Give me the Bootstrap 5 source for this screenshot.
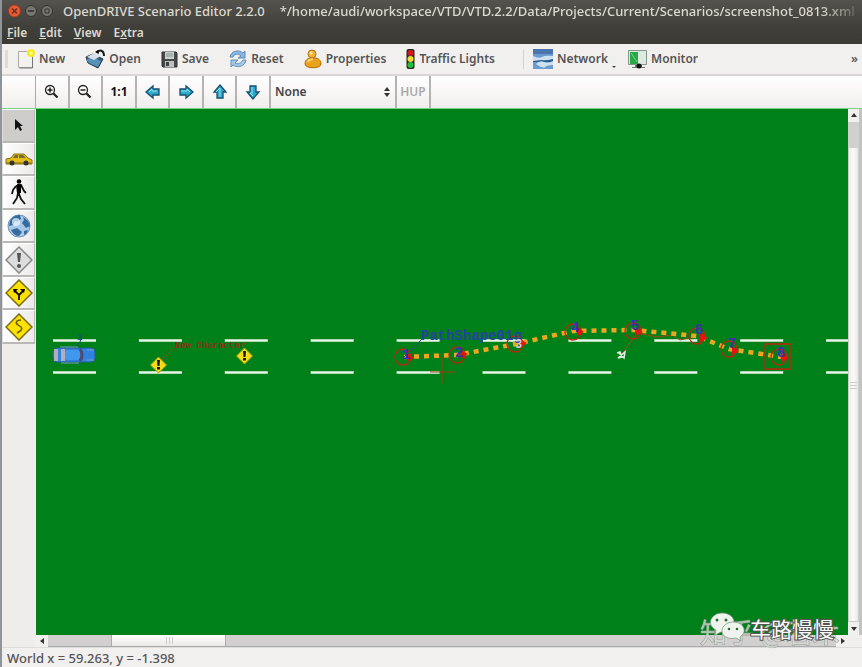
<!DOCTYPE html>
<html lang="en">
<head>
<meta charset="utf-8">
<meta name="viewport" content="width=device-width, initial-scale=1">
<title>OpenDRIVE Scenario Editor 2.2.0</title>
<link href="https://cdn.jsdelivr.net/npm/bootstrap@5.3.0/dist/css/bootstrap.min.css" rel="stylesheet">
<style>
body{font:600 12px/16px "Noto Sans","Open Sans",sans-serif;color:#555;background:#f1efee;border-left:2px solid #8e9498}
button{font:inherit;color:inherit;background:none;border:0;padding:0}
svg{display:block;flex:none}
.head-bar{background:linear-gradient(#55534d,#403f39 60%,#3b3a35);color:#dcd9d0}
.title-row{height:22px;padding:0 2px 0 6px;font-size:13px;font-weight:500}
.title-name{margin-left:9px;margin-right:15px}
.file-path{-webkit-mask-image:linear-gradient(90deg,#000 94%,#0003)}
.menu-row{height:22px;padding-left:5px;gap:12px}
.tool-row{height:32px;border-bottom:2px solid #dad8d6;background:#f2f0ef;padding-left:3px}
.grip{width:3px;height:18px;background:#dddbd9;margin-right:9px}
.tool-set{gap:20px}
.tool-set.tight{gap:12px}
.tool-set button{gap:4px}
.divide{width:1px;height:20px;background:#d5d3d1;margin:0 9px 0 28px}
.view-row{height:33px;background:linear-gradient(#fff,#f0eeec);border-bottom:1px solid #7bd388}
.pad-cell{width:34px;border-right:1px solid #aaa}
.view-set{width:235px}
.view-set button,.hup{border-right:2px solid #b5b3b1;color:#111;background:linear-gradient(#fff,#f0eeec)}
.pick-box{width:126px;border-right:2px solid #b5b3b1}
.pick-box select{font:inherit;color:#444;appearance:none;background:transparent;border:0;padding:0 4px}
.pick-box svg{right:4px;top:10px;pointer-events:none}
.hup{width:34px;color:#aaa!important}
.side-bar{width:33px;background:#efedec;margin-right:1px}
.side-set{height:235px}
.side-set button{background:linear-gradient(90deg,#fff,#eceae9);border:1px solid #bab8b6;border-left-color:#ddd;border-top-color:#fff;border-bottom-width:2px}
.side-set button.on{background:#cfcdcc}
.plane{background:#008019;min-width:0}
.plane text{font-family:"Liberation Mono",monospace}
.vbar{width:14px;background:#d2d0cf;border-right:3px solid #c5c3c2}
.hbar{height:12px;background:#d2d0cf;margin-right:14px;border-bottom:1px solid #aaa}
.knob{background:#f2f0ef;width:12px;height:12px}
.vbar .knob{width:11px;height:13px}
.slide-v{background:linear-gradient(90deg,#f0eeed,#fafafa,#e9e7e6);border:1px solid #d0cecd;margin-top:25px}
.slide-h{width:115px;background:linear-gradient(#fff,#ebe9e8);margin-left:63px;border:1px solid #aaa;border-width:0 1px}
.status{height:20px;padding-left:5px;background:#f2f0ef;border-top:1px solid #ddd;font-size:13px;font-weight:500}
.stamp{right:12px;bottom:18px;width:150px;height:38px;font-weight:400}
</style>
<script src="https://cdn.jsdelivr.net/npm/bootstrap@5.3.0/dist/js/bootstrap.bundle.min.js"></script>
</head>
<body class="vh-100 d-flex flex-column overflow-hidden position-relative">
<header class="head-bar">
  <div class="title-row d-flex align-items-center text-nowrap">
    <svg width="46" height="16" fill="none"><circle cx="6.500" cy="8" r="6" fill="#e75b37" stroke="#993d25"/><path d="M4 5.500l5 5m0-5l-5 5" stroke="#71301e" stroke-width="1.600"/><circle cx="23" cy="8" r="5.500" fill="#77756f" stroke="#33322e"/><path d="M20 8h6" stroke="#33322e" stroke-width="1.500"/><circle cx="39" cy="8" r="5.500" fill="#77756f" stroke="#33322e"/><path d="M37 6h4v4h-4z" stroke="#33322e"/></svg>
    <span class="title-name">OpenDRIVE Scenario Editor 2.2.0</span><span class="file-path">*/home/audi/workspace/VTD/VTD.2.2/Data/Projects/Current/Scenarios/screenshot_0813.xml</span>
  </div>
  <nav class="menu-row d-flex align-items-center">
    <button><u>F</u>ile</button><button><u>E</u>dit</button><button><u>V</u>iew</button><button>E<u>x</u>tra</button>
  </nav>
</header>
<div class="tool-row d-flex align-items-center text-nowrap">
  <span class="grip"></span>
  <div class="tool-set d-flex align-items-center">
    <button class="d-flex align-items-center"><svg width="18" height="20"><path d="M1.500 2.500h14v16h-14z" fill="#f3f2ed" stroke="#aaa"/><path d="M15.500 7v12h-13" fill="none" stroke="#777"/><circle cx="14" cy="4" r="4" fill="#f4ed24"/><circle cx="14" cy="4" r="1.500" fill="#ffffa0"/></svg>New</button>
    <button class="d-flex align-items-center"><svg width="20" height="20"><path d="M1 8l7-3 10 5-5 9-10-5z" fill="#315b7c" stroke="#29394a"/><path d="M1 11l6-3 9 4-3 6-9-4z" fill="#5992b8"/><path d="M2 8l7-4 7 3-7 4z" fill="#d5dfe5"/><path d="M12 4c2-4 7-3 7 3" fill="none" stroke="#151a20" stroke-width="2"/><path d="M10 3l3-2 1 4z"/></svg>Open</button>
    <button class="d-flex align-items-center"><svg width="17" height="18"><path d="M1 2h14l1 1v14H2l-1-1z" fill="#45494b" stroke="#303233"/><path d="M4 2h9v7H4z" fill="#c8d2ce"/><path d="M5 4h7M5 6h7" stroke="#829087"/><path d="M4 11h9v6H4z" fill="#bdbfc0"/><path d="M5 12h3v4H5z" fill="#3d4142"/></svg>Save</button>
    <button class="d-flex align-items-center"><svg width="18" height="18"><path d="M1 7c1-6 9-8 13-4l2-2v7H9l3-2C9 3 5 4 4 7z" fill="#8bb6df" stroke="#5b8abb"/><path d="M17 10c-1 7-9 8-13 5l-2 2v-7h7l-3 3c3 2 6 0 8-3z" fill="#a6c8e8" stroke="#6290bd"/></svg>Reset</button>
    <button class="d-flex align-items-center"><svg width="18" height="20"><path d="M1 15c0-4 3-6 6-6h4c3 0 6 2 6 6 0 5-16 5-16 0z" fill="#e9a31b" stroke="#b36c08"/><path d="M4 13c1-2 3-3 5-3" fill="none" stroke="#ffd975" stroke-width="2"/><circle cx="8" cy="5" r="4" fill="#eeb436" stroke="#b7720d"/><circle cx="7" cy="4" r="1.500" fill="#ffe4a0"/></svg>Properties</button>
    <button class="d-flex align-items-center"><svg width="9" height="22"><rect x=".5" y="1" width="8" height="20" rx="2" fill="#252b1e"/><circle cx="4.500" cy="5" r="3" fill="#d51b22"/><circle cx="4.500" cy="11" r="3" fill="#f2db36"/><circle cx="4.500" cy="17" r="3" fill="#26bd3d"/></svg>Traffic Lights</button>
  </div>
  <span class="divide"></span>
  <div class="tool-set tight d-flex align-items-center">
    <button class="d-flex align-items-center"><svg width="20" height="20"><path d="M0 0h20v20H0z" fill="#6b9bd0"/><path d="M0 0h20v5H0z" fill="#4b75ae"/><path d="M0 10h20v3H0z" fill="#2d5a8e"/><path d="M0 7q6 3 9 1t11-1v3q-7 2-11 1L0 12zM3 15q4-4 8-2t9-1v4q-6 0-8 2t-9-3z" fill="#cce2ef"/></svg>Network<svg width="4" height="20"><path d="M0 17h4l-2 2z" fill="#444"/></svg></button>
    <button class="d-flex align-items-center"><svg width="19" height="20"><path d="M.5 1.500h18v14H.5z" fill="#dce9df" stroke="#819788"/><path d="M2 3h8v12H2z" fill="#28a746"/><path d="M3 4l6 9" stroke="#73d388"/><path d="M7 16h7v2h3v1H4v-1h3z" fill="#777"/><circle cx="11" cy="17" r="2.500" fill="#111"/></svg>Monitor</button>
  </div>
  <button class="ms-auto pe-1" aria-label="More tools">»</button>
</div>
<div class="view-row d-flex">
  <span class="pad-cell"></span>
  <div class="view-set d-flex">
    <button class="flex-fill w-100 d-flex align-items-center justify-content-center" aria-label="Zoom in"><svg width="16" height="16" fill="none" stroke="#222"><circle cx="6" cy="6" r="4.500" stroke-width="1.300"/><path d="M3.500 6h5M6 3.500v5" stroke-width="1.500"/><path d="M9.500 9.500l4 4" stroke-width="2.300"/></svg></button>
    <button class="flex-fill w-100 d-flex align-items-center justify-content-center" aria-label="Zoom out"><svg width="16" height="16" fill="none" stroke="#222"><circle cx="6" cy="6" r="4.500" stroke-width="1.300"/><path d="M3.500 6h5" stroke-width="1.500"/><path d="M9.500 9.500l4 4" stroke-width="2.300"/></svg></button>
    <button class="flex-fill w-100 fw-bold">1:1</button>
    <button class="flex-fill w-100 d-flex align-items-center justify-content-center" aria-label="Pan left"><svg width="16" height="16"><path id="arrow" d="M1 8l7-6v3h6v6H8v3z" fill="#31a9c9" stroke="#164f70" stroke-width="1.300"/><path d="M4 8l3-3v2h5" fill="none" stroke="#8de0ed"/></svg></button>
    <button class="flex-fill w-100 d-flex align-items-center justify-content-center" aria-label="Pan right"><svg width="16" height="16"><g transform="rotate(180 8 8)"><use href="#arrow"/></g><path d="M3 7h6V5l3 3" fill="none" stroke="#8de0ed"/></svg></button>
    <button class="flex-fill w-100 d-flex align-items-center justify-content-center" aria-label="Pan up"><svg width="16" height="16"><g transform="rotate(90 8 8)"><use href="#arrow"/></g><path d="M4 8l4-4v9" fill="none" stroke="#8de0ed"/></svg></button>
    <button class="flex-fill w-100 d-flex align-items-center justify-content-center" aria-label="Pan down"><svg width="16" height="16"><g transform="rotate(-90 8 8)"><use href="#arrow"/></g><path d="M7 3v6H5l3 3" fill="none" stroke="#8de0ed"/></svg></button>
  </div>
  <div class="pick-box position-relative"><select class="w-100 h-100" aria-label="Selection"><option>None</option></select><svg class="position-absolute" width="8" height="12"><path d="M1 5l3-4 3 4zM1 7l3 4 3-4z" fill="#333"/></svg></div>
  <button class="hup" disabled>HUP</button>
</div>
<main class="flex-fill d-flex overflow-hidden">
  <aside class="side-bar flex-shrink-0"><div class="side-set d-flex flex-column">
    <button class="on flex-fill d-flex align-items-center justify-content-center" aria-label="Select"><svg width="28" height="28"><path d="M10 8v11l3-3 2 4 2-1-2-4h3z" fill="#111"/></svg></button>
    <button class="flex-fill d-flex align-items-center justify-content-center" aria-label="Vehicle"><svg width="28" height="28"><path d="M1 14l5-1 3-4h10l4 4 4 2v4H1z" fill="#e5bc18" stroke="#887114"/><path d="M8 13l2-3h3v3zm6-3h4l3 3h-7z" fill="#746c3b"/><path d="M1 18h25" stroke="#7e6818"/><circle cx="7" cy="18" r="2.500" fill="#34342d"/><circle cx="21" cy="18" r="2.500" fill="#34342d"/></svg></button>
    <button class="flex-fill d-flex align-items-center justify-content-center" aria-label="Pedestrian"><svg width="28" height="28"><circle cx="14" cy="3.500" r="2.300"/><path d="M12 7h4l3 6 2 2M11 8l-3 4-1 4M14 7v9l2 5 4 5M13 15l-1 5-4 6" fill="none" stroke="#111" stroke-width="1.800"/><path d="M11 7h5v8h-4z"/></svg></button>
    <button class="flex-fill d-flex align-items-center justify-content-center" aria-label="World"><svg width="28" height="28"><circle cx="14" cy="14" r="11" fill="#a7c8e7" stroke="#7293b5"/><path d="M5 9q4-7 10-6l1 4-4 3-2-1-2 4-4 1zm13-4q6 3 7 9l-4 2-4-5 2-3zM6 18l6-2 5 4-3 4q-5 0-8-6zm13 1l4-1q-1 4-4 5z" fill="#356c9f"/><circle cx="11" cy="10" r="4" fill="#eef7ff" opacity=".7"/></svg></button>
    <button class="flex-fill d-flex align-items-center justify-content-center" aria-label="Action"><svg width="28" height="28"><path d="M14 1l13 13-13 13L1 14z" fill="#ddd" stroke="#888" stroke-width="1.500"/><path d="M12 7h4l-1 9h-2z" fill="#555"/><circle cx="14" cy="20" r="2" fill="#555"/></svg></button>
    <button class="flex-fill d-flex align-items-center justify-content-center" aria-label="Route"><svg width="28" height="28"><path d="M14 1l13 13-13 13L1 14z" fill="#ffe100" stroke="#776c12" stroke-width="1.500"/><path d="M14 21v-5l-4-4m4 4l4-4" fill="none" stroke="#111" stroke-width="1.800"/><path d="M8 10h5l-4 4zm12 0h-5l4 4z"/></svg></button>
    <button class="flex-fill d-flex align-items-center justify-content-center" aria-label="Path"><svg width="28" height="28"><path d="M14 1l13 13-13 13L1 14z" fill="#ffe100" stroke="#776c12" stroke-width="1.500"/><path d="M16 7c-5 0-6 3-3 5l3 2c2 2 0 4-4 6" fill="none" stroke="#665a08" stroke-width="1.500"/></svg></button>
  </div></aside>
  <div class="flex-fill d-flex flex-column overflow-hidden">
    <div class="d-flex flex-fill overflow-hidden">
      <div class="plane flex-fill overflow-hidden">
        <!-- Scenario drawing: lane marks, vehicle, triggers and path -->
        <svg class="w-100 h-100"><g transform="translate(-36 -109)" fill="none">
          <path d="M53 340.500h875M53 372.500h875" stroke="#e8f6e8" stroke-width="2.500" stroke-dasharray="43 42.900"/>
          <path d="M82 335l-2 7-7 8" stroke="#174f7b"/><text x="77" y="340" font-size="9" fill="#155487">1</text>
          <rect x="53" y="348" width="42" height="14" rx="4" fill="#2f83df" stroke="#285d91"/><path d="M54 349h4v12h-4zM61 349h4v12h-4z" fill="#b4adb9"/><rect x="65" y="350" width="15" height="10" rx="2" fill="#4196ed"/><path d="M80 349q4 6 0 12" stroke="#4f4b6f" stroke-width="3"/><path d="M60 347h18M61 363h18M87 350h7M87 360h7" stroke="#789fc3"/>
          <path d="M159 363l17-17" stroke="#8a4c0b"/><text x="175" y="348" font-size="9" font-weight="700" fill="#8e3110">New Character</text>
          <g id="warn"><path d="M158.500 357l8 8-8 8-8-8z" fill="#f4dc16" stroke="#ac9c0c"/><path d="M157 360h3l-.5 6h-2zm0 7h3v2.500h-3z" fill="#161909"/></g><use href="#warn" x="86" y="-9"/>
          <path d="M442 357v26M430 372h25" stroke="#a13c0c"/>
          <path d="M637 333l-15 21" stroke="#93500d"/><path d="M637 333l20 4 15-2 8 5 14-3" stroke="#994b0c"/><path d="M617 353l3-1 2 5-4 1 7-6-1 6-5-5" stroke="#e6eee4" stroke-width="1.500"/>
          <path d="M404 357L457 355 516 344 573 331 634 330 697 336 729 349 781 357" stroke="#eea620" stroke-width="4.500" stroke-dasharray="5 5"/>
          <g stroke="#bd260a" stroke-width="1.300"><circle cx="403" cy="357" r="8"/><circle cx="457" cy="355" r="8"/><circle cx="515" cy="344" r="8"/><circle cx="573" cy="332" r="8"/><circle cx="633" cy="331" r="8"/><circle cx="697" cy="336" r="8"/><circle cx="729" cy="349" r="8"/><circle cx="779" cy="357" r="8"/><path d="M765 344h25v25h-25z"/></g>
          <path d="M407 353l7 5-7 4zM460 350l8 4-7 5zM519 339l8 4-7 5zM577 327l7 5-7 4zM635 327l8 5-8 4zM700 332l8 6-8 4zM732 346l7 5-7 4zM782 353l7 5-7 4z" fill="#e51413"/>
          <path d="M404 357l18-18" stroke="#254b75"/>
          <text x="421" y="340" font-size="14" fill="#2742a0">PathShape01g</text>
          <g font-size="14" font-weight="700" fill="#3d2fb0"><text x="402" y="359">1</text><text x="455" y="357">2</text><text x="515" y="348" font-size="12" fill="#e4c9dc">3</text><text x="571" y="332">4</text><text x="631" y="330">5</text><text x="695" y="334">6</text><text x="728" y="348">7</text><text x="777" y="357">8</text></g>
        </g></svg>
      </div>
      <div class="vbar d-flex flex-column flex-shrink-0"><span class="knob"><svg width="11" height="13"><path d="M3 8l3-4 3 4z" fill="#333"/></svg></span><span class="slide-v flex-fill d-flex align-items-center justify-content-center"><svg width="7" height="8"><path d="M0 1.500h7M0 4.500h7M0 7.500h7" stroke="#ccc"/></svg></span><span class="knob"><svg width="11" height="13"><path d="M3 5l3 4 3-4z" fill="#333"/></svg></span></div>
    </div>
    <div class="hbar d-flex"><span class="knob"><svg width="12" height="12"><path d="M8 3L4 6l4 3z" fill="#333"/></svg></span><span class="slide-h d-flex align-items-center justify-content-center"><svg width="8" height="7"><path d="M1.500 0v7M4.500 0v7M7.500 0v7" stroke="#ccc"/></svg></span><span class="knob ms-auto"><svg width="12" height="12"><path d="M5 3l4 3-4 3z" fill="#333"/></svg></span></div>
  </div>
</main>
<footer class="status d-flex align-items-center">World x = 59.263, y = -1.398</footer>
<svg class="stamp position-absolute" font-family="'Noto Sans CJK SC',sans-serif"><text x="0" y="32" font-size="27" fill="#d4d8d3" stroke="#8a938a" stroke-width="1" paint-order="stroke" opacity=".8">知乎 @若木</text><g fill="#eef4ed" stroke="#799178" stroke-width=".7"><path d="M22 2c8 0 13 5 12 11s-6 9-13 8l-6 3 1-5c-11-6-4-17 6-17z"/><path d="M33 11c8 0 12 5 11 10-1 3-3 4-4 5l1 4-5-3c-8 2-14-2-14-7s5-9 11-9z"/></g><g fill="#2b6c34"><circle cx="17" cy="9" r="1.500"/><circle cx="26" cy="9" r="1.500"/><circle cx="29" cy="18" r="1.300"/><circle cx="37" cy="18" r="1.300"/></g><text x="50" y="26" font-size="21" fill="#fff" stroke="#555" stroke-width="2" paint-order="stroke">车路慢慢</text></svg>
</body>
</html>
